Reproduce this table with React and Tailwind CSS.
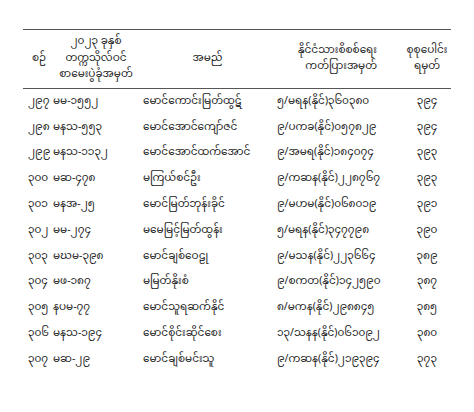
const rows = [
  ["၂၉၇", "မမ-၁၅၅၂", "မောင်ကောင်းမြတ်ထွဋ်", "၅/မရန(နိုင်)၃၆၀၃၈၀", "၃၉၄"],
  ["၂၉၈", "မနသ-၅၅၃", "မောင်အောင်ကျော်ဇင်", "၉/ပကခ(နိုင်)၀၅၇၈၂၉", "၃၉၄"],
  ["၂၉၉", "မနသ-၁၁၃၂", "မောင်အောင်ထက်အောင်", "၉/အမရ(နိုင်)၁၈၄၀၇၄", "၃၉၃"],
  ["၃၀၀", "မဆ-၄၇၈", "မကြယ်စင်ဦး", "၉/ကဆန(နိုင်)၂၂၈၇၆၇", "၃၉၃"],
  ["၃၀၁", "မနအ-၂၅", "မောင်မြတ်ဘုန်းခိုင်", "၉/မဟမ(နိုင်)၀၆၈၀၁၉", "၃၉၁"],
  ["၃၀၂", "မမ-၂၇၄", "မမေမြင့်မြတ်ထွန်း", "၅/မရန(နိုင်)၃၄၇၇၉၈", "၃၉၀"],
  ["၃၀၃", "မဃမ-၃၉၈", "မောင်ချစ်ဝေဠု", "၉/မသန(နိုင်)၂၂၃၆၆၄", "၃၈၉"],
  ["၃၀၄", "မဖ-၁၈၇", "မမြတ်နိုးစံ", "၉/စကတ(နိုင်)၁၄၂၅၉၀", "၃၈၇"],
  ["၃၀၅", "နပမ-၇၇", "မောင်သူရဆက်နိုင်", "၈/မကန(နိုင်)၂၉၈၈၄၅", "၃၈၅"],
  ["၃၀၆", "မနသ-၁၉၄", "မောင်စိုင်းဆိုင်စေး", "၁၃/သနန(နိုင်)၀၆၁၀၉၂", "၃၈၀"],
  ["၃၀၇", "မဆ-၂၉", "မောင်ချစ်မင်းသူ", "၉/ကဆန(နိုင်)၂၁၉၃၉၄", "၃၇၃"],
];

const cols = "grid grid-cols-[29px_88px_135px_123px_58px]";

export default function App() {
  return (
    <div
      className="w-[474px] h-[412px] bg-white text-[#222] text-[10.5px] pt-[29px] px-[23px] overflow-hidden"
      style={{ fontFamily: '"Noto Sans Myanmar", "Padauk", "Myanmar Text", "Noto Sans", sans-serif' }}
    >
      <div className="border-t-[1.5px] border-b-[1.5px] border-[#555]">
        <div className={`${cols} h-[58px] items-center leading-[16.5px]`}>
          <div className="text-center pl-[3px]">စဉ်</div>
          <div className="text-center">
            <div>၂၀၂၃ ခုနှစ်</div>
            <div>တက္ကသိုလ်ဝင်</div>
            <div>စာမေးပွဲခုံအမှတ်</div>
          </div>
          <div className="text-center">အမည်</div>
          <div className="text-right pr-[21px]">
            <div>နိုင်ငံသားစိစစ်ရေး</div>
            <div>ကတ်ပြားအမှတ်</div>
          </div>
          <div className="text-center">
            <div>စုစုပေါင်း</div>
            <div>ရမှတ်</div>
          </div>
        </div>
      </div>

      {rows.map((r) => (
        <div key={r[0]} className={`${cols} h-[25.8px] items-center leading-[16px]`}>
          <div className="pl-[5px]">{r[0]}</div>
          <div className="pl-[1px]">{r[1]}</div>
          <div className="pl-[3px]">{r[2]}</div>
          <div className="pl-[2px]">{r[3]}</div>
          <div className="text-center">{r[4]}</div>
        </div>
      ))}
    </div>
  );
}
